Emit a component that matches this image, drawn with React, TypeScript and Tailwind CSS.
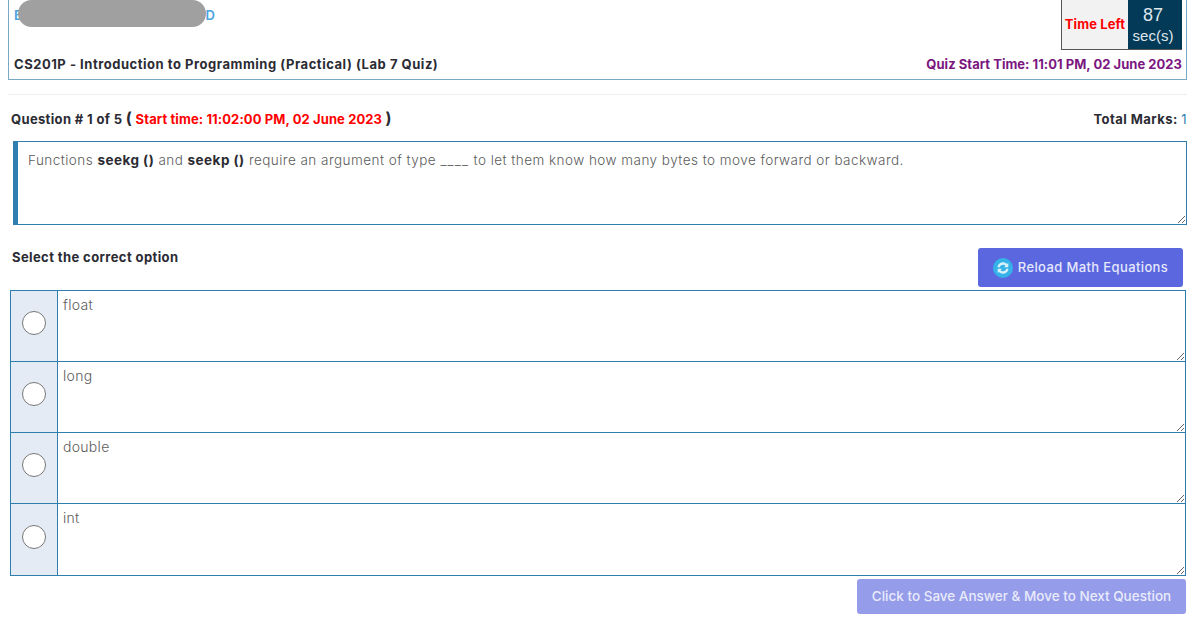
import React from 'react';

const options = ['float', 'long', 'double', 'int'];

const OptionRow = ({ label, last }: { label: string; last: boolean }) => (
  <div className={`flex h-[71px] ${last ? '' : 'border-b border-[#2f7fae]'}`}>
    <div className="w-[47px] shrink-0 bg-[#e4ebf5] border-r border-[#2f7fae] flex items-center justify-center pb-[6px]">
      <span className="w-[24px] h-[24px] rounded-full bg-white border border-[#777777]" />
    </div>
    <div className="flex-1 resize-y overflow-auto px-[5px] pt-[4px] text-[14px] leading-[20px] font-light tracking-[0.3px] text-[#5c5c5c]">{label}</div>
  </div>
);

export default function App() {
  return (
    <div className="w-[1200px] h-[630px] overflow-hidden bg-white font-['Inter','Open_Sans',sans-serif] text-[#2b2b33]">
      {/* Student and course header */}
      <div className="ml-[8px] mr-[13px] h-[80px] border-x border-b border-[#7aa9c5] pl-[5px] pr-[4px] flex flex-col">
        <div className="flex justify-between h-[50px]">
          <div className="flex items-start pt-[7px] text-[13px] leading-[17px] font-semibold text-[#4aa3df]">
            <span>B</span>
            <span className="w-[188px] h-[27px] -mt-[7px] -ml-[5px] mr-0 rounded-[14px] bg-[#a0a0a0]" />
            <span>D</span>
          </div>
          <div className="flex w-[121px] h-[50px] border-l border-b border-[#555555]">
            <div className="w-[66px] bg-[#f2f2f2] flex items-center justify-center text-[13px] font-bold text-[#ff0000] tracking-[0.1px]">Time Left</div>
            <div className="flex-1 bg-[#023a57] text-[#dfe7ec] text-center pr-[4px] font-['Liberation_Sans',sans-serif]">
              <div className="text-[18px] leading-[20px] pt-[5px]">87</div>
              <div className="text-[15px] leading-[20px] pt-[1px]">sec(s)</div>
            </div>
          </div>
        </div>
        <div className="flex justify-between items-center mt-[5px] text-[13px] leading-[18px] font-bold">
          <span className="tracking-[0.53px]">CS201P - Introduction to Programming (Practical) (Lab 7 Quiz)</span>
          <span className="text-[#7b1680] tracking-[0.03px]">Quiz Start Time: 11:01 PM, 02 June 2023</span>
        </div>
      </div>

      <div className="ml-[8px] mr-[13px] mt-[14px] h-[1px] bg-[#eeeeee]" />

      {/* Question heading */}
      <div className="ml-[11px] mr-[13px] mt-[14px] flex justify-between items-center text-[13px] leading-[18px] font-bold">
        <span className="tracking-[0.35px]">
          Question # 1 of 5 <span className="text-[16px]">(</span> <span className="text-[#ff0000] tracking-[0.1px]">Start time: 11:02:00 PM, 02 June 2023</span> <span className="text-[16px]">)</span>
        </span>
        <span className="tracking-[0.45px]">
          Total Marks: <span className="font-normal text-[#2f7fae]">1</span>
        </span>
      </div>

      {/* Question text */}
      <div className="ml-[13px] mr-[13px] mt-[13px] h-[84px] border border-[#2f7fae] border-l-[5px] resize-y overflow-auto pl-[10px] pt-[8px] text-[13.5px] leading-[20px] font-light text-[#5c5c5c] tracking-[0.46px]">
        Functions <b className="font-bold text-[#2b2b33]">seekg ()</b> and <b className="font-bold text-[#2b2b33]">seekp ()</b> require an argument of type <span className="tracking-[1.2px]">____</span> to let them know how many bytes to move forward or backward.
      </div>

      <div className="ml-[12px] mr-[17px] mt-[23px] flex justify-between items-start">
        <span className="text-[13px] leading-[18px] font-bold tracking-[0.4px]">Select the correct option</span>
        <button className="w-[205px] h-[39px] rounded-[3px] bg-[#5a67df] text-[#e6e8fb] text-[13px] font-medium tracking-[0.38px] flex items-center justify-center gap-[5px]">
          <svg width="20" height="20" viewBox="0 0 20 20" fill="none">
            <circle cx="10" cy="10" r="10" fill="#35b3e8" />
            <path d="M4.5 9a5.6 5.6 0 0 1 9.6-3l1.2-1v4.2h-4.2l1.4-1.4A3.6 3.6 0 0 0 6.5 9.6z" fill="#d8f2fc" />
            <path d="M15.5 11a5.6 5.6 0 0 1-9.6 3l-1.2 1v-4.2h4.2l-1.4 1.4a3.6 3.6 0 0 0 6-1.8z" fill="#d8f2fc" />
          </svg>
          Reload Math Equations
        </button>
      </div>

      {/* Answer options */}
      <div className="ml-[10px] mr-[14px] mt-[3px] border border-[#2f7fae]">
        {options.map((o, i) => (
          <OptionRow key={o} label={o} last={i === options.length - 1} />
        ))}
      </div>

      <div className="mr-[14px] mt-[3px] flex justify-end">
        <button className="w-[329px] h-[35px] rounded-[3px] bg-[#959ce9] text-[#e9ebfb] text-[13.5px] font-medium">
          Click to Save Answer &amp; Move to Next Question
        </button>
      </div>
    </div>
  );
}
